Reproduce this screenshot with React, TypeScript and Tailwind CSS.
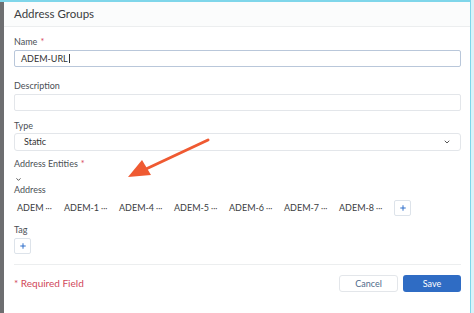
import { ChevronDown, Plus } from "lucide-react";

const entities = ["ADEM", "ADEM-1", "ADEM-4", "ADEM-5", "ADEM-6", "ADEM-7", "ADEM-8"];

function Label({ text, required }: { text: string; required?: boolean }) {
  return (
    <div className="text-[9px] leading-[12px] text-[#4a4f55]">
      {text}
      {required && <span className="ml-[3px] text-[#d6455a]">*</span>}
    </div>
  );
}

function AddButton() {
  return (
    <button className="flex h-[16px] w-[17px] items-center justify-center rounded-[2px] border border-[#dde3ea] bg-white text-[#2f6fca]">
      <Plus className="h-[8px] w-[8px]" strokeWidth={3} />
    </button>
  );
}

export default function App() {
  return (
    <div
      className="flex h-[313px] w-[474px] overflow-hidden bg-white"
      style={{ fontFamily: "Lato, 'Open Sans', sans-serif" }}
    >
      {/* left strip */}
      <div className="w-[4px] shrink-0 border-t-2 border-[#7fd6ea] bg-[#6d6e70]" />

      {/* panel */}
      <div className="flex flex-1 flex-col border-t-2 border-[#7fd6ea] bg-white">
        {/* Header */}
        <div className="flex h-[25px] items-center border-b border-[#eceeef] bg-[#fbfcfc] px-[10px]">
          <h2 className="text-[11.5px] text-[#3a3d41]">Address Groups</h2>
        </div>

        {/* Body */}
        <div className="relative flex flex-1 flex-col pl-[10px] pr-[9px] pt-[9px]">
          <Label text="Name" required />
          <div className="mt-[2px] flex h-[17px] items-center rounded-[2px] border border-[#b9c7da] bg-white px-[6px] text-[9px] text-[#333]">
            ADEM-URL<span className="ml-[1px] h-[9px] w-px bg-[#333]" />
          </div>

          <div className="mt-[13px]">
            <Label text="Description" />
          </div>
          <div className="mt-[2px] h-[17px] rounded-[2px] border border-[#e3e6ea] bg-white" />

          <div className="mt-[9px]">
            <Label text="Type" />
          </div>
          <div className="mt-[1px] flex h-[18px] items-center justify-between rounded-[3px] border border-[#e3e6ea] bg-white px-[9px] text-[9px] text-[#333]">
            <span>Static</span>
            <ChevronDown className="h-[8px] w-[8px] text-[#555]" strokeWidth={3} />
          </div>

          <div className="mt-[7px]">
            <Label text="Address Entities" required />
          </div>
          <div className="mt-[5px] flex h-[8px] items-center pl-[1px]">
            <ChevronDown className="h-[7px] w-[7px] text-[#444]" strokeWidth={3} />
          </div>
          <div className="mt-[1px]">
            <Label text="Address" />
          </div>
          <div className="mt-[4px] flex h-[16px] items-center pl-[3px]">
            {entities.map((e, i) => (
              <span
                key={e}
                className={`${i === 0 ? "w-[47px]" : "w-[55px]"} shrink-0 whitespace-nowrap text-[9px] text-[#3a3d41]`}
              >
                {e}
                <span className="ml-[2px] text-[8px]">···</span>
              </span>
            ))}
            <AddButton />
          </div>

          <div className="mt-[8px]">
            <Label text="Tag" />
          </div>
          <div className="mt-[2px]">
            <AddButton />
          </div>

          <div className="mt-[10px] border-t border-[#eceeef]" />

          <div className="mt-[10px] flex items-center justify-between">
            <span className="text-[10px] text-[#d0475a]">
              * Required Field
            </span>
            <div className="flex gap-[5px]">
              <button className="h-[17px] w-[59px] rounded-[3px] border border-[#e3e6ea] bg-white text-[9px] text-[#4f6a8a]">
                Cancel
              </button>
              <button className="h-[17px] w-[58px] rounded-[3px] bg-[#2f6cc4] text-[9px] text-white">
                Save
              </button>
            </div>
          </div>

          {/* annotation arrow */}
          <svg
            className="pointer-events-none absolute left-[120px] top-[110px]"
            width="90"
            height="45"
            viewBox="0 0 90 45"
          >
            <line x1="84" y1="3" x2="22" y2="32" stroke="#ef5a32" strokeWidth="3" strokeLinecap="round" />
            <polygon points="4,40 18,23 27,38" fill="#ef5a32" />
          </svg>
        </div>
      </div>

      {/* right edge */}
      <div className="w-[1px] shrink-0 bg-[#7fd6ea]" />
      <div className="w-[3px] shrink-0 bg-[#d9f3f9]" />
    </div>
  );
}
